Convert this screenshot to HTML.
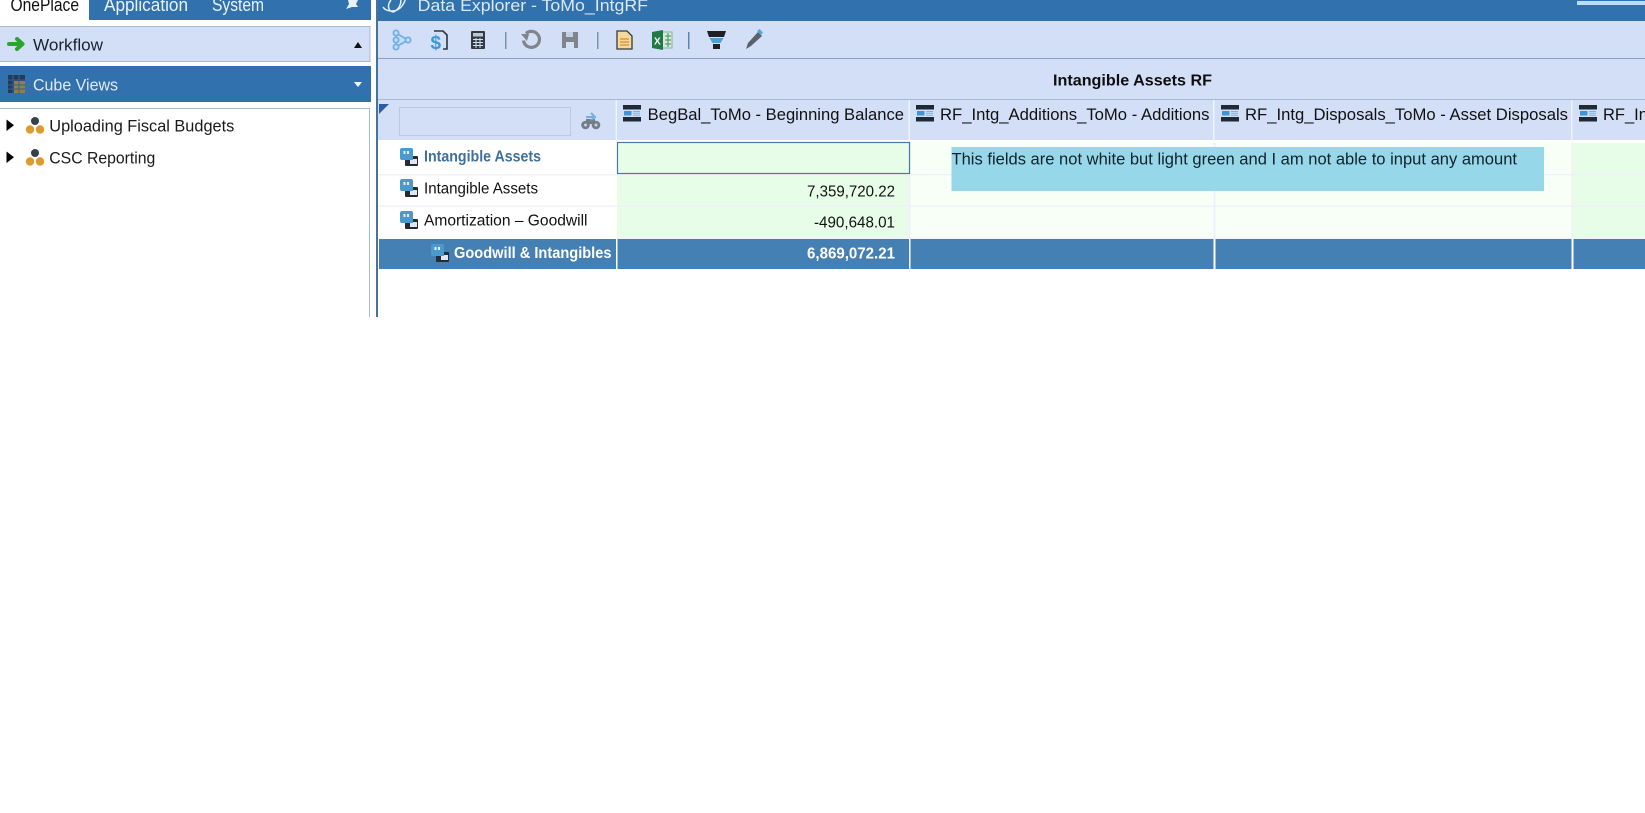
<!DOCTYPE html>
<html><head><meta charset="utf-8"><style>
html,body{margin:0;padding:0;background:#fff;width:1645px;height:813px;overflow:hidden}
svg{display:block;filter:blur(.3px)}
text{font-family:"Liberation Sans",sans-serif}
</style></head><body>
<svg width="1645" height="813" viewBox="0 0 1645 813" xmlns="http://www.w3.org/2000/svg">
<defs>
<g id="hd"><rect x="0" y="0" width="18" height="4.500" fill="#1f2a36"/><rect x="1" y="6" width="7.500" height="4.500" fill="#3f93d6"/><path d="M10 6.500h7M10 8.300h7M10 10.200h7" stroke="#7fb2e0" stroke-width="1"/><rect x="0" y="12" width="18" height="4.500" fill="#1f2a36"/></g>
<g id="mem"><rect x="0" y="0" width="13" height="12" rx="2" fill="#4a9ad0"/><rect x="3.500" y="3" width="2" height="3" fill="#e4f0fa"/><rect x="7" y="3" width="2" height="3" fill="#e4f0fa"/><rect x="5" y="8" width="13" height="10" rx="1" fill="#232b34"/><rect x="10" y="11" width="7" height="5" fill="#dfe8f1"/><rect x="5" y="8" width="8" height="4" fill="#4a9ad0"/></g>
<g id="cube"><circle cx="9" cy="4.500" r="4" fill="#38404a"/><circle cx="4" cy="13" r="4.200" fill="#dd9a2d"/><circle cx="14" cy="13" r="4.200" fill="#dd9a2d"/></g>
</defs>
<rect width="1645" height="813" fill="#fff"/>

<!-- left tabs -->
<rect x="0" y="0" width="371" height="20" fill="#3071ae"/>
<rect x="0" y="0" width="89" height="20" fill="#fff"/>
<text x="10.500" y="11" font-size="18" fill="#111" textLength="68.500" lengthAdjust="spacingAndGlyphs">OnePlace</text>
<text x="104" y="11" font-size="18" fill="#eaf2fa" textLength="84" lengthAdjust="spacingAndGlyphs">Application</text>
<text x="212" y="11" font-size="18" fill="#eaf2fa" textLength="52" lengthAdjust="spacingAndGlyphs">System</text>
<path d="M346 9l3-5-1-4h10l-2 4 2 3h-6z" fill="#e8f0f8"/>

<!-- workflow -->
<rect x="-1" y="26.500" width="371" height="35" fill="#d2dff7" stroke="#a9bbd0" stroke-width="1"/>
<path d="M9 44h12M17 39l5.500 5-5.500 5" fill="none" stroke="#2ca52c" stroke-width="4" stroke-linecap="round" stroke-linejoin="round"/>
<text x="33" y="50.500" font-size="17" fill="#1a2230" textLength="70" lengthAdjust="spacingAndGlyphs">Workflow</text>
<path d="M354 48h8l-4-6z" fill="#111"/>

<!-- cube views -->
<rect x="0" y="66" width="371" height="36" fill="#3071ae"/>
<rect x="8" y="75" width="17" height="18" fill="#1f3c5e"/>
<rect x="14" y="81" width="11" height="12" fill="#8e7d55"/>
<path d="M8 80h17M8 85h17M8 89h17M13 75v18M19 75v18" stroke="#3c5f86" stroke-width="1"/>
<text x="33" y="90.500" font-size="17" fill="#dfeaf6" textLength="85" lengthAdjust="spacingAndGlyphs">Cube Views</text>
<path d="M354 82h8l-4 5z" fill="#fff"/>

<!-- tree -->
<path d="M0 108.500H369.500V317" fill="none" stroke="#a5bccf" stroke-width="1"/>
<path d="M6.500 119.500v11.500l7.500-5.750z" fill="#000"/>
<use href="#cube" x="26" y="116.500"/>
<text x="49.300" y="131.500" font-size="17" fill="#1a1a1a" textLength="185" lengthAdjust="spacingAndGlyphs">Uploading Fiscal Budgets</text>
<path d="M6.500 151.500v11.500l7.500-5.750z" fill="#000"/>
<use href="#cube" x="26" y="148.500"/>
<text x="49.300" y="163.500" font-size="17" fill="#1a1a1a" textLength="106" lengthAdjust="spacingAndGlyphs">CSC Reporting</text>

<!-- main -->
<rect x="376" y="0" width="2" height="317" fill="#4a7298"/>
<rect x="378" y="0" width="1267" height="21" fill="#3071ae"/>
<path d="M383 7c3 5 14 6 19-1 2-3 3-5 3-6M391 0c-4 5-3 11 2 12 6-2 8-8 8-12" fill="none" stroke="#e6eef8" stroke-width="1.500"/>
<text x="417.700" y="11" font-size="17" fill="#dce8f5" textLength="230.300" lengthAdjust="spacingAndGlyphs">Data Explorer - ToMo_IntgRF</text>
<rect x="1577" y="1" width="68" height="4" fill="#bcdcf8"/>

<!-- toolbar + title + header fill -->
<rect x="378" y="21" width="1267" height="119" fill="#d2dff7"/>
<rect x="378" y="58" width="1267" height="1" fill="#8a9fbc"/>

<g fill="#c4dcf4" stroke="#6fb0e6" stroke-width="1.800">
<path d="M396 33l12 7-12 7z"/><circle cx="396" cy="33" r="2.600"/><circle cx="396" cy="40" r="2.600"/><circle cx="396" cy="47" r="2.600"/><circle cx="408" cy="40" r="2.600"/>
</g>
<path d="M434 31h9l4 4v14h-4" fill="none" stroke="#2c3640" stroke-width="1.600"/>
<text x="430.500" y="49" font-size="19" font-weight="bold" fill="#3a98d8">$</text>
<rect x="471" y="31" width="14" height="18" rx="1" fill="#343a40"/><rect x="473" y="33" width="10" height="3.500" fill="#b7c8dc"/>
<path d="M473 39.500h10M473 42.500h10M473 45.500h10M476 38v10M480 38v10" stroke="#d2dff7" stroke-width="1"/>
<rect x="505" y="32" width="1.500" height="17" fill="#7b93ac"/>
<path d="M526 33.500a8 8 0 1 1-2.500 7" fill="none" stroke="#7f858b" stroke-width="3.200"/><path d="M521 34l8 0-2 7z" fill="#7f858b"/>
<rect x="562" y="32" width="16" height="16" fill="#7f858b"/><rect x="566" y="32" width="7" height="5" fill="#c4d0e4"/><rect x="566" y="42" width="8" height="6" fill="#d2dff7"/>
<rect x="597" y="32" width="1.500" height="17" fill="#7b93ac"/>
<path d="M617 31h10l5 5v13h-15z" fill="#f3d9a0" stroke="#3a3a36" stroke-width="1.300"/><path d="M620 39h9M620 42h9M620 45h9" stroke="#dc9c35" stroke-width="1.400"/>
<rect x="659" y="32" width="13" height="16" fill="#d8e8dc" stroke="#8ab59a"/><path d="M665 36h6M665 40h6M665 44h6M668 33v14" stroke="#3f8f5d" stroke-width="1"/>
<path d="M652 32l11-2v20l-11-2z" fill="#1f7a43"/>
<text x="654" y="44.500" font-size="10" font-weight="bold" fill="#fff">X</text>
<rect x="688" y="32" width="1.500" height="17" fill="#5f86ae"/>
<path d="M707 31h19l-2 6h-15z" fill="#1d2127"/><path d="M709.500 38h14l-3 5h-8z" fill="#4aa0d8"/><path d="M713 44h7v5h-7z" fill="#1d2127"/>
<path d="M746 49l2-6 10-11 4 4-11 10z" fill="#5a6168"/><path d="M757 31l2.500-2 3.500 3.500-2 2.500z" fill="#5aa5dc"/>

<!-- title row -->
<text x="1053" y="85.500" font-size="16" font-weight="bold" fill="#0e0e0e" textLength="159" lengthAdjust="spacingAndGlyphs">Intangible Assets RF</text>
<rect x="378" y="99" width="1267" height="1" fill="#a9b9cf"/>

<!-- header row gaps -->
<rect x="378" y="140" width="1267" height="3" fill="#fff"/>
<rect x="615.500" y="100" width="1.500" height="41" fill="#eef3fc"/>
<rect x="908.500" y="100" width="1.500" height="41" fill="#eef3fc"/>
<rect x="1213" y="100" width="1.500" height="41" fill="#eef3fc"/>
<rect x="1571" y="100" width="1.500" height="41" fill="#eef3fc"/>
<path d="M379 104h10l-10 10z" fill="#2a5ca8"/>
<rect x="399.500" y="107.500" width="171" height="28" fill="#d2dff7" stroke="#bccae0"/>
<g fill="#737d88"><circle cx="585.500" cy="125" r="4.300"/><circle cx="596" cy="125" r="4.300"/><rect x="586" y="119" width="9" height="5"/></g>
<circle cx="585.500" cy="125" r="1.500" fill="#c4d0e4"/><circle cx="596" cy="125" r="1.500" fill="#c4d0e4"/>
<path d="M586 117h8M591 113l4 4-4 3" fill="none" stroke="#74aee0" stroke-width="2"/>

<use href="#hd" x="623" y="105"/>
<text x="647.700" y="120" font-size="16.500" fill="#111" textLength="256.300" lengthAdjust="spacingAndGlyphs">BegBal_ToMo - Beginning Balance</text>
<use href="#hd" x="916" y="105"/>
<text x="940" y="120" font-size="16.500" fill="#111" textLength="269.500" lengthAdjust="spacingAndGlyphs">RF_Intg_Additions_ToMo - Additions</text>
<use href="#hd" x="1221" y="105"/>
<text x="1245" y="120" font-size="16.500" fill="#111" textLength="323" lengthAdjust="spacingAndGlyphs">RF_Intg_Disposals_ToMo - Asset Disposals</text>
<use href="#hd" x="1579" y="105"/>
<text x="1603" y="120" font-size="16.500" fill="#111">RF_Intg</text>

<!-- body cells -->
<rect x="617" y="143" width="1028" height="96" fill="#eef1f9"/>
<g fill="#e8fde8">
<rect x="617" y="143" width="291.500" height="31"/><rect x="617" y="175.500" width="291.500" height="30"/><rect x="617" y="207" width="291.500" height="31"/>
<rect x="1573" y="143" width="72" height="31"/><rect x="1573" y="175.500" width="72" height="30"/><rect x="1573" y="207" width="72" height="31"/>
</g>
<g fill="#f8fff6">
<rect x="910.500" y="143" width="303" height="31"/><rect x="910.500" y="175.500" width="303" height="30"/><rect x="910.500" y="207" width="303" height="31"/>
<rect x="1215.500" y="143" width="356" height="31"/><rect x="1215.500" y="175.500" width="356" height="30"/><rect x="1215.500" y="207" width="356" height="31"/>
</g>
<rect x="378" y="174" width="239" height="1.500" fill="#eef1f9"/>
<rect x="378" y="205.500" width="239" height="1.500" fill="#eef1f9"/>
<rect x="617.500" y="142.500" width="292" height="31" fill="#e8fde8" stroke="#4a76a8" stroke-width="1.200"/>

<!-- annotation -->
<rect x="951.500" y="147" width="592.500" height="44" fill="#96d8e9"/>
<text x="951.500" y="164.500" font-size="16.500" fill="#10222c" textLength="565.500" lengthAdjust="spacingAndGlyphs">This fields are not white but light green and I am not able to input any amount</text>

<!-- labels -->
<use href="#mem" x="400" y="148"/>
<text x="424" y="161.500" font-size="15.500" font-weight="bold" fill="#3f6f9c" textLength="117" lengthAdjust="spacingAndGlyphs">Intangible Assets</text>
<use href="#mem" x="400" y="179"/>
<text x="424" y="193.500" font-size="15.500" fill="#111" textLength="114" lengthAdjust="spacingAndGlyphs">Intangible Assets</text>
<use href="#mem" x="400" y="211"/>
<text x="424" y="225.500" font-size="15.500" fill="#111" textLength="163.500" lengthAdjust="spacingAndGlyphs">Amortization – Goodwill</text>
<text x="807" y="196.500" font-size="15.500" fill="#111" textLength="88" lengthAdjust="spacingAndGlyphs">7,359,720.22</text>
<text x="814" y="227.500" font-size="15.500" fill="#111" textLength="81" lengthAdjust="spacingAndGlyphs">-490,648.01</text>

<!-- total row -->
<rect x="379" y="239" width="1266" height="30" fill="#4580b5"/>
<rect x="616" y="239" width="1.500" height="30" fill="#fff"/>
<rect x="909" y="239" width="1.500" height="30" fill="#fff"/>
<rect x="1213.500" y="239" width="2" height="30" fill="#fff"/>
<rect x="1571.500" y="239" width="2" height="30" fill="#fff"/>
<use href="#mem" x="431" y="244"/>
<text x="454" y="258" font-size="15.500" font-weight="bold" fill="#fff" textLength="157.500" lengthAdjust="spacingAndGlyphs">Goodwill &amp; Intangibles</text>
<text x="807" y="258.500" font-size="15.500" font-weight="bold" fill="#fff" textLength="88" lengthAdjust="spacingAndGlyphs">6,869,072.21</text>
</svg>
</body></html>
